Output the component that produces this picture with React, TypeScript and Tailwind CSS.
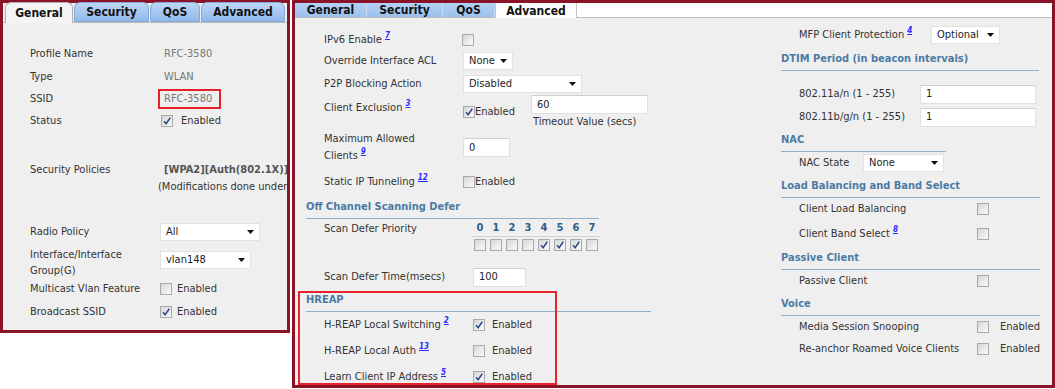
import React from "react";

function Check({ on }: { on?: boolean }) {
  return (
    <span className="relative inline-block w-[12px] h-[12px] shrink-0 border border-[#a9a9a9] bg-linear-to-br from-[#d6d6d6] to-[#fbfbfb]">
      {on && (
        <svg viewBox="0 0 10 10" className="absolute left-[0px] top-[0px] w-[10px] h-[10px]">
          <path d="M2 5.2 L4.1 7.8 L8.3 1.8" fill="none" stroke="#2c4a86" strokeWidth="1.5" />
        </svg>
      )}
    </span>
  );
}

function Sup({ n }: { n: string }) {
  return (
    <span className="relative -top-[5px] ml-[3px] text-[8px] font-bold italic underline text-[#2b2bff] leading-none">
      {n}
    </span>
  );
}

function Select({ value, w }: { value: string; w: string }) {
  return (
    <div className={`${w} h-[18px] shrink-0 bg-white border border-[#e2e2e2] flex items-center justify-between pl-[5px] pr-[5px] text-[#222]`}>
      <span>{value}</span>
      <svg viewBox="0 0 7 4" className="w-[7px] h-[4px]">
        <path d="M0 0 H7 L3.5 4 Z" fill="#111" />
      </svg>
    </div>
  );
}

function Input({ value, w }: { value: string; w: string }) {
  return (
    <div className={`${w} h-[19px] shrink-0 bg-white border border-[#e0e0e0] border-t-[#cfcfcf] flex items-center pl-[5px] text-[#222]`}>
      {value}
    </div>
  );
}

function Header({ title, w }: { title: string; w: string }) {
  return (
    <div className={`${w} h-[20px] pt-[1px] leading-[14px] font-bold text-[#4b7ba4] border-b border-[#8fb0c8]`}>
      {title}
    </div>
  );
}

function LeftPanel() {
  const tabs = ["General", "Security", "QoS", "Advanced"];
  const widths = ["w-[68px]", "w-[75px]", "w-[50px]", "w-[84px]"];
  return (
    <div className="relative w-[290px] h-[333px] shrink-0 border-[3px] border-[#8b1328] bg-[#efefef] flex flex-col">
      <div className="h-[20px] flex items-end gap-[1px] pl-[2px] border-b border-[#b9b9b9]">
        {tabs.map((t, i) => (
          <div
            key={t}
            className={`${widths[i]} h-[20px] rounded-t-[6px] flex items-center justify-center font-bold text-[12px] text-[#111] ${
              i === 0
                ? "bg-[#f4f4f4] border border-b-0 border-[#b0b0b0] -mb-[1px] h-[21px]"
                : "bg-linear-to-b from-[#bcd6f6] to-[#92b9ea] border border-[#86a9d6]"
            }`}
          >
            {t}
          </div>
        ))}
      </div>
      <div className="pl-[27px] pt-[20px] flex flex-col text-[#333]">
        <div className="h-[22px] flex items-center">
          <span className="w-[130px]">Profile Name</span>
          <span className="pl-[4px] text-[#777]">RFC-3580</span>
        </div>
        <div className="h-[23px] flex items-center">
          <span className="w-[130px]">Type</span>
          <span className="pl-[4px] text-[#777]">WLAN</span>
        </div>
        <div className="h-[22px] flex items-center">
          <span className="w-[130px]">SSID</span>
          <span className="-ml-[2px] h-[20px] w-[63px] border-2 border-[#e3222b] pl-[4px] leading-[16px] text-[#777]">RFC-3580</span>
        </div>
        <div className="h-[22px] flex items-center">
          <span className="w-[131px]">Status</span>
          <Check on />
          <span className="ml-[8px]">Enabled</span>
        </div>
        <div className="h-[29px]" />
        <div className="h-[18px] flex items-center whitespace-nowrap">
          <span className="w-[130px] shrink-0">Security Policies</span>
          <span className="pl-[4px] font-bold text-[#555]">[WPA2][Auth(802.1X)]</span>
        </div>
        <div className="h-[16px] flex items-center whitespace-nowrap overflow-hidden">
          <span className="pl-[128px] text-[#333]">(Modifications done under security tab will appear after applying the changes.)</span>
        </div>
        <div className="h-[27px]" />
        <div className="h-[20px] flex items-center">
          <span className="w-[130px]">Radio Policy</span>
          <Select value="All" w="w-[100px]" />
        </div>
        <div className="h-[36px] flex items-start">
          <span className="w-[130px] mt-[5px] leading-[16px]">
            Interface/Interface
            <br />
            Group(G)
          </span>
          <div className="mt-[9px]">
            <Select value="vlan148" w="w-[91px]" />
          </div>
        </div>
        <div className="h-[22px] flex items-center">
          <span className="w-[130px]">Multicast Vlan Feature</span>
          <Check />
          <span className="ml-[5px]">Enabled</span>
        </div>
        <div className="h-[23px] flex items-center">
          <span className="w-[130px]">Broadcast SSID</span>
          <Check on />
          <span className="ml-[5px]">Enabled</span>
        </div>
      </div>
    </div>
  );
}

function RightTabs() {
  const tabs = ["General", "Security", "QoS", "Advanced"];
  const widths = ["w-[72px]", "w-[76px]", "w-[52px]", "w-[82px]"];
  return (
    <div className="h-[18px] flex items-stretch bg-white border-b border-[#bdbdbd]">
      {tabs.map((t, i) => (
        <div
          key={t}
          className={`${widths[i]} flex items-center justify-center font-bold text-[12px] text-[#111] ${
            i === 3
              ? "bg-white border-x border-[#c4c4c4] -mb-[1px]"
              : "bg-linear-to-b from-[#b4d0f4] to-[#9cc1ee] border-r border-[#c9dbf2]"
          }`}
        >
          {t}
        </div>
      ))}
    </div>
  );
}

function LeftColumn() {
  return (
    <div className="w-[356px] shrink-0 flex flex-col pt-[11px] text-[#333]">
      <div className="pl-[29px] flex flex-col">
        <div className="h-[21px] flex items-center">
          <span className="w-[138px] whitespace-nowrap">
            IPv6 Enable<Sup n="7" />
          </span>
          <Check />
        </div>
        <div className="h-[22px] flex items-center">
          <span className="w-[139px]">Override Interface ACL</span>
          <Select value="None" w="w-[50px]" />
        </div>
        <div className="h-[23px] flex items-center">
          <span className="w-[139px]">P2P Blocking Action</span>
          <Select value="Disabled" w="w-[119px]" />
        </div>
        <div className="h-[35px] flex items-start">
          <span className="w-[139px] mt-[6px] leading-[14px] whitespace-nowrap">
            Client Exclusion<Sup n="3" />
          </span>
          <div className="w-[68px] mt-[10px] flex items-center">
            <Check on />
            <span>Enabled</span>
          </div>
          <div className="flex flex-col">
            <Input value="60" w="w-[117px]" />
            <span className="pl-[2px] leading-[15px]">Timeout Value (secs)</span>
          </div>
        </div>
        <div className="h-[35px] flex items-start">
          <span className="w-[139px] leading-[17px]">
            Maximum Allowed
            <br />
            Clients<Sup n="9" />
          </span>
          <div className="mt-[8px]">
            <Input value="0" w="w-[47px]" />
          </div>
        </div>
        <div className="h-[34px] flex items-center">
          <span className="w-[139px] whitespace-nowrap">
            Static IP Tunneling<Sup n="12" />
          </span>
          <Check />
          <span>Enabled</span>
        </div>
      </div>
      <div className="pl-[11px]">
        <Header title="Off Channel Scanning Defer" w="w-[293px]" />
      </div>
      <div className="pl-[29px] flex flex-col">
        <div className="h-[45px] flex items-start">
          <span className="w-[148px] mt-[3px] leading-[14px]">Scan Defer Priority</span>
          <div className="flex flex-col mt-[2px]">
            <div className="flex border-b border-[#d2d2d2] pb-[1px] font-bold text-[#2d5f8a]">
              {[0, 1, 2, 3, 4, 5, 6, 7].map((n) => (
                <span key={n} className="w-[16px] text-center leading-[14px]">
                  {n}
                </span>
              ))}
            </div>
            <div className="flex pt-[2px]">
              {[0, 1, 2, 3, 4, 5, 6, 7].map((n) => (
                <span key={n} className="w-[16px] flex justify-center">
                  <Check on={n >= 4 && n <= 6} />
                </span>
              ))}
            </div>
          </div>
        </div>
        <div className="h-[26px] flex items-center">
          <span className="w-[149px]">Scan Defer Time(msecs)</span>
          <Input value="100" w="w-[53px]" />
        </div>
      </div>
      <div className="pl-[11px] mt-[2px]">
        <Header title="HREAP" w="w-full" />
      </div>
      <div className="pl-[29px] flex flex-col">
        {[
          ["H-REAP Local Switching", "2", true],
          ["H-REAP Local Auth", "13", false],
          ["Learn Client IP Address", "5", true],
        ].map(([l, n, on]) => (
          <div key={l as string} className="h-[26px] flex items-center">
            <span className="w-[149px] whitespace-nowrap">
              {l as string}
              <Sup n={n as string} />
            </span>
            <Check on={on as boolean} />
            <span className="ml-[7px]">Enabled</span>
          </div>
        ))}
      </div>
    </div>
  );
}

function RightColumn() {
  return (
    <div className="ml-[130px] w-[260px] shrink-0 flex flex-col pt-[8px] text-[#333]">
      <div className="h-[18px] pl-[18px] flex items-center">
        <span className="w-[132px] whitespace-nowrap">
          MFP Client Protection<Sup n="4" />
        </span>
        <Select value="Optional" w="w-[69px]" />
      </div>
      <div className="mt-[7px]">
        <Header title="DTIM Period (in beacon intervals)" w="w-[258px]" />
      </div>
      <div className="mt-[13px] h-[20px] pl-[18px] flex items-center">
        <span className="w-[121px]">802.11a/n (1 - 255)</span>
        <Input value="1" w="w-[116px]" />
      </div>
      <div className="mt-[3px] h-[20px] pl-[18px] flex items-center">
        <span className="w-[121px]">802.11b/g/n (1 - 255)</span>
        <Input value="1" w="w-[116px]" />
      </div>
      <div className="mt-[5px]">
        <Header title="NAC" w="w-[165px]" />
      </div>
      <div className="mt-[2px] h-[18px] pl-[18px] flex items-center">
        <span className="w-[64px]">NAC State</span>
        <Select value="None" w="w-[81px]" />
      </div>
      <div className="mt-[6px]">
        <Header title="Load Balancing and Band Select" w="w-[259px]" />
      </div>
      <div className="mt-[1px] h-[20px] pl-[18px] flex items-center">
        <span className="w-[178px]">Client Load Balancing</span>
        <Check />
      </div>
      <div className="mt-[5px] h-[20px] pl-[18px] flex items-center">
        <span className="w-[178px] whitespace-nowrap">
          Client Band Select<Sup n="8" />
        </span>
        <Check />
      </div>
      <div className="mt-[6px]">
        <Header title="Passive Client" w="w-[259px]" />
      </div>
      <div className="mt-[1px] h-[20px] pl-[18px] flex items-center">
        <span className="w-[178px]">Passive Client</span>
        <Check />
      </div>
      <div className="mt-[5px]">
        <Header title="Voice" w="w-[259px]" />
      </div>
      <div className="mt-[1px] h-[20px] pl-[18px] flex items-center whitespace-nowrap">
        <span className="w-[178px]">Media Session Snooping</span>
        <Check />
        <span className="ml-[11px]">Enabled</span>
      </div>
      <div className="mt-[2px] h-[20px] pl-[18px] flex items-center whitespace-nowrap">
        <span className="w-[178px]">Re-anchor Roamed Voice Clients</span>
        <Check />
        <span className="ml-[11px]">Enabled</span>
      </div>
    </div>
  );
}

function RightPanel() {
  return (
    <div className="relative w-[763px] h-[388px] shrink-0 border-[3px] border-[#8b1328] bg-[#efefef] flex flex-col overflow-hidden">
      <RightTabs />
      <div className="flex">
        <LeftColumn />
        <RightColumn />
      </div>
      <div className="absolute left-[3px] top-[288px] w-[259px] h-[94px] border-2 border-[#e8222b]" />
    </div>
  );
}

export default function App() {
  return (
    <div className="w-[1055px] h-[389px] bg-white flex gap-[2px] text-[11px] leading-[14px] font-['DejaVu_Sans_Condensed','DejaVu_Sans',sans-serif] overflow-hidden">
      <LeftPanel />
      <RightPanel />
    </div>
  );
}
